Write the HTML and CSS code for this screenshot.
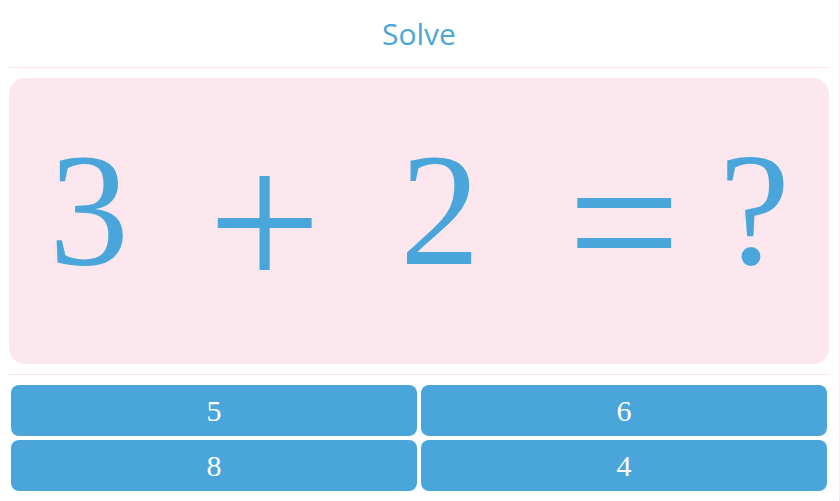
FILE: index.html
```html
<!DOCTYPE html>
<html lang="en">
<head>
<meta charset="utf-8">
<title>Solve</title>
<link rel="stylesheet" href="styles.css">
</head>
<body>
<div class="app">
  <header class="header">
    <h1 class="title">Solve</h1>
  </header>
  <section class="card">
    <div class="equation">
      <div class="tok">3</div>
      <div class="tok"><span class="op">+</span></div>
      <div class="tok">2</div>
      <div class="tok"><span class="op">=</span></div>
      <div class="tok">?</div>
    </div>
  </section>
  <div class="answers">
    <button class="answer">5</button>
    <button class="answer">6</button>
    <button class="answer">8</button>
    <button class="answer">4</button>
  </div>
</div>
</body>
</html>
```
FILE: styles.css
```css
html, body {
  margin: 0;
  padding: 0;
  background: #ffffff;
}

.app {
  box-sizing: border-box;
  width: 840px;
  height: 501px;
  padding: 0 10px 0 9px;
  border-right: 1px dotted #f3d6e0;
  display: flex;
  flex-direction: column;
}

.header {
  height: 67px;
  border-bottom: 1px solid #f8e3ea;
  display: flex;
  align-items: center;
  justify-content: center;
}

.title {
  margin: 0;
  padding-top: 1px;
  font-family: "Open Sans", sans-serif;
  font-weight: 400;
  font-size: 30px;
  color: #4aa6da;
  line-height: 1.36;
}

.card {
  box-sizing: border-box;
  margin-top: 10px;
  height: 286px;
  padding-bottom: 9px;
  background: #fde7ef;
  border-radius: 16px;
  display: flex;
  align-items: center;
}

.equation {
  width: 100%;
  display: grid;
  grid-template-columns: 160px 191px 160px 208px 53px 1fr;
  align-items: baseline;
  justify-items: center;
  font-family: "Liberation Serif", serif;
  font-size: 160px;
  line-height: 195px;
  color: #4aa6da;
}

.tok {
  white-space: nowrap;
}

.op {
  font-size: 1.26em;
  vertical-align: -0.13em;
}

.answers {
  margin-top: 10px;
  border-top: 1px solid #f8e3ea;
  padding: 10px 2px 0;
  display: grid;
  grid-template-columns: 1fr 1fr;
  grid-auto-rows: 51px;
  gap: 4px;
}

.answer {
  margin: 0;
  border: none;
  border-radius: 8px;
  background: #4aa6da;
  color: #ffffff;
  font-family: "Liberation Serif", serif;
  font-size: 30px;
  padding: 0;
  cursor: pointer;
}
```
